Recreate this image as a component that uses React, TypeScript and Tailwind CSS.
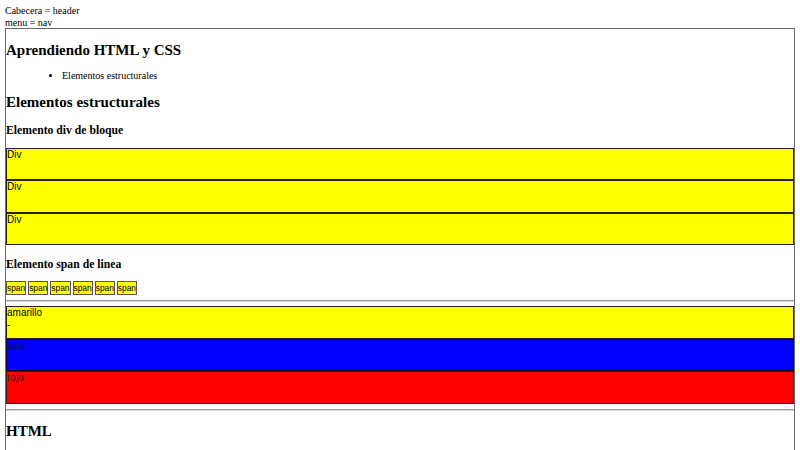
export default function App() {
  const sans = "font-['Liberation_Sans',Arial,sans-serif]";

  return (
    <div className="min-h-[450px] bg-white p-[5px] font-['Liberation_Serif','Times_New_Roman',serif] text-[10px] leading-[11.5px] text-black">
      {/* header / nav labels */}
      <div>Cabecera = header</div>
      <div>menu = nav</div>

      <div className="border border-[#6b6b6b]">
        <h1 className="mt-[12.5px] mb-[11.5px] text-[15px] font-bold leading-[17px]">Aprendiendo HTML y CSS</h1>
        <ul className="my-[10px] list-disc pl-[56px]">
          <li>Elementos estructurales</li>
        </ul>

        <h2 className="my-[12.5px] text-[15px] font-bold leading-[17px]">Elementos estructurales</h2>
        <h3 className="mt-[11.5px] mb-[10.5px] text-[11.7px] font-bold leading-[13.5px]">Elemento div de bloque</h3>

        {/* block divs */}
        <div className={sans}>
          <div className="h-[32.6px] border border-[#222] bg-[#ffff00]">Div</div>
          <div className="h-[32.6px] border border-[#222] bg-[#ffff00]">Div</div>
          <div className="h-[32.6px] border border-[#222] bg-[#ffff00]">Div</div>
        </div>

        <h3 className="mt-[12.5px] mb-[10px] text-[11.7px] font-bold leading-[13.5px]">Elemento span de linea</h3>
        <div className="flex gap-[2px]">
          {[0, 1, 2, 3, 4, 5].map((i) => (
            <span
              key={i}
              className={`${sans} border border-[#555] bg-[#ffff00] text-[8.4px] leading-[12px]`}
            >
              span
            </span>
          ))}
        </div>
        <hr className="my-[4.5px] border-t border-b border-t-[#9a9a9a] border-b-[#d8d8d8]" />

        {/* colour stripes */}
        <div className={sans}>
          <div className="h-[32.6px] border border-[#222] bg-[#ffff00]">
            amarillo
            <br />-
          </div>
          <div className="h-[32.6px] border border-[#111] bg-[#0000ff] text-[#111]">azul</div>
          <div className="h-[32.6px] border border-[#222] bg-[#ff0000] text-[#222]">rojo</div>
        </div>
        <hr className="my-[4.5px] border-t border-b border-t-[#9a9a9a] border-b-[#d8d8d8]" />

        <h2 className="my-[12.5px] text-[15px] font-bold leading-[17px]">HTML</h2>
      </div>
    </div>
  );
}
